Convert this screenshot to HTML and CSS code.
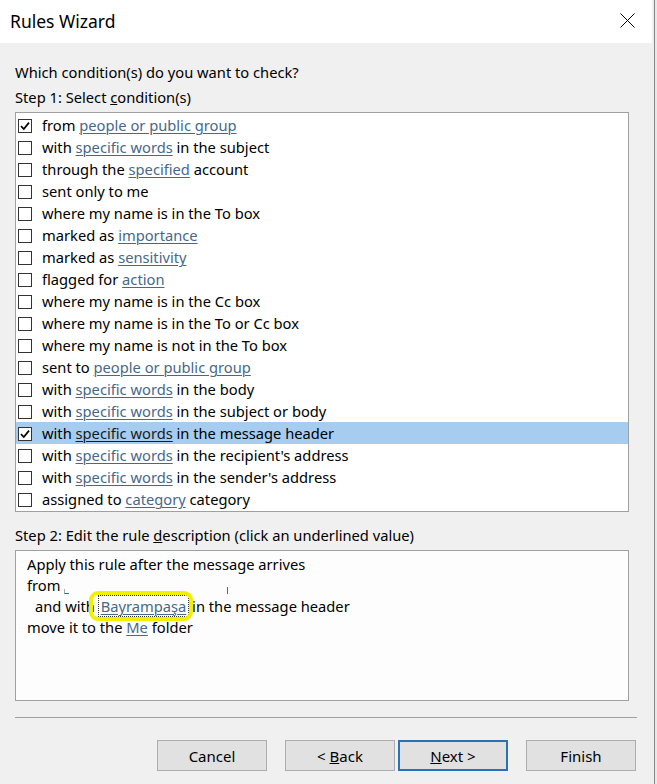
FILE: index.html
```html
<!DOCTYPE html>
<html lang="en">
<head>
<meta charset="utf-8">
<title>Rules Wizard</title>
<link rel="stylesheet" href="styles.css">
</head>
<body>
<div class="window">
  <div class="titlebar">
    <span class="title">Rules Wizard</span>
    <svg class="close" width="15" height="15" viewBox="0 0 15 15"><path d="M0.5 0.5 L14.5 14.5 M14.5 0.5 L0.5 14.5" stroke="#000" stroke-width="1" fill="none"/></svg>
  </div>
  <div class="content">
    <div class="heading">Which condition(s) do you want to check?</div>
    <div class="label">Step 1: Select <u>c</u>ondition(s)</div>
    <ul class="conditions">
      <li class="row"><span class="cb checked"><svg viewBox="0 0 12 12"><path d="M2 6.2 L4.8 9 L10 2.6" stroke="#000" stroke-width="1.7" fill="none"/></svg></span><span>from <a class="lnk">people or public group</a></span></li>
      <li class="row"><span class="cb"></span><span>with <a class="lnk">specific words</a> in the subject</span></li>
      <li class="row"><span class="cb"></span><span>through the <a class="lnk">specified</a> account</span></li>
      <li class="row"><span class="cb"></span><span>sent only to me</span></li>
      <li class="row"><span class="cb"></span><span>where my name is in the To box</span></li>
      <li class="row"><span class="cb"></span><span>marked as <a class="lnk">importance</a></span></li>
      <li class="row"><span class="cb"></span><span>marked as <a class="lnk">sensitivity</a></span></li>
      <li class="row"><span class="cb"></span><span>flagged for <a class="lnk">action</a></span></li>
      <li class="row"><span class="cb"></span><span>where my name is in the Cc box</span></li>
      <li class="row"><span class="cb"></span><span>where my name is in the To or Cc box</span></li>
      <li class="row"><span class="cb"></span><span>where my name is not in the To box</span></li>
      <li class="row"><span class="cb"></span><span>sent to <a class="lnk">people or public group</a></span></li>
      <li class="row"><span class="cb"></span><span>with <a class="lnk">specific words</a> in the body</span></li>
      <li class="row"><span class="cb"></span><span>with <a class="lnk">specific words</a> in the subject or body</span></li>
      <li class="row selected"><span class="cb checked"><svg viewBox="0 0 12 12"><path d="M2 6.2 L4.8 9 L10 2.6" stroke="#000" stroke-width="1.7" fill="none"/></svg></span><span>with <a class="lnk">specific words</a> in the message header</span></li>
      <li class="row"><span class="cb"></span><span>with <a class="lnk">specific words</a> in the recipient's address</span></li>
      <li class="row"><span class="cb"></span><span>with <a class="lnk">specific words</a> in the sender's address</span></li>
      <li class="row"><span class="cb"></span><span>assigned to <a class="lnk">category</a> category</span></li>
    </ul>
    <div class="label step2">Step 2: Edit the rule <u>d</u>escription (click an underlined value)</div>
    <div class="desc">
      <div class="dline">Apply this rule after the message arrives</div>
      <div class="dline">from <span class="redacted"></span></div>
      <div class="dline indent">and with <span class="mark"><a class="lnk focus">Bayrampaşa</a></span> in the message header</div>
      <div class="dline">move it to the <a class="lnk">Me</a> folder</div>
    </div>
    <hr class="sep">
    <div class="buttons">
      <button class="btn">Cancel</button>
      <button class="btn back">&lt; <u>B</u>ack</button>
      <button class="btn next"><u>N</u>ext &gt;</button>
      <button class="btn finish">Finish</button>
    </div>
  </div>
</div>
</body>
</html>
```

FILE: styles.css
```css
html, body {
  margin: 0;
  padding: 0;
}
body {
  background: #e9e9e9;
  font-family: "Noto Sans", "Open Sans", sans-serif;
  font-size: 14.7px;
  color: #000;
  width: 657px;
  height: 784px;
  overflow: hidden;
}
.window {
  width: 654px;
  height: 784px;
  background: #f0f0f0;
  border-right: 1px solid #858585;
}
.titlebar {
  height: 43px;
  background: #fff;
  display: flex;
  align-items: center;
  justify-content: space-between;
  padding: 0 17px 0 10px;
  margin-right: 2px;
}
.title {
  font-size: 17.5px;
  line-height: 22px;
  margin-top: -1px;
}
.close {
  display: block;
  margin-top: -2px;
}
.content {
  padding: 18px 0 0 15px;
}
.heading {
  line-height: 22px;
}
.label {
  line-height: 22px;
  margin-top: 3px;
}
.label u {
  text-decoration-thickness: 1px;
}
.conditions {
  list-style: none;
  margin: 4px 0 0;
  padding: 1px 0;
  width: 614px;
  box-sizing: border-box;
  border: 1px solid #a0a0a0;
  background: #fff;
}
.row {
  height: 22px;
  display: flex;
  align-items: center;
  padding-left: 2px;
  white-space: nowrap;
}
.row.selected {
  background: #a6cdf0;
}
.cb {
  width: 12px;
  height: 12px;
  border: 1px solid #333;
  background: #fff;
  margin-right: 10px;
  margin-top: 2px;
  flex: none;
}
.cb svg {
  display: block;
  width: 12px;
  height: 12px;
}
.lnk {
  color: #476889;
  text-decoration: underline;
  text-decoration-thickness: 1px;
  text-underline-offset: 2px;
}
.selected .lnk {
  color: #1a1a1a;
}
.step2 {
  margin-top: 12px;
}
.desc {
  margin-top: 4px;
  width: 614px;
  height: 151px;
  box-sizing: border-box;
  border: 1px solid #a0a0a0;
  background: #fdfdfd;
  padding: 3px 11px;
}
.dline {
  line-height: 21px;
  white-space: nowrap;
}
.indent {
  padding-left: 8px;
}
.redacted {
  display: inline-block;
  width: 164px;
  height: 14px;
  position: relative;
  vertical-align: -3px;
}
.redacted::before {
  content: "";
  position: absolute;
  left: 0;
  bottom: 0;
  width: 4px;
  height: 4px;
  border-bottom: 1px solid #476889;
  border-left: 1px solid #9fb0c0;
}
.redacted::after {
  content: "";
  position: absolute;
  right: 0;
  bottom: 0;
  width: 1px;
  height: 7px;
  background: #476889;
}
.mark {
  position: relative;
  display: inline-block;
}
.mark::after {
  content: "";
  position: absolute;
  left: -10px;
  right: -5px;
  top: -5px;
  bottom: -4px;
  border: 4px solid #f4ee00;
  border-radius: 9px;
  pointer-events: none;
}
.focus {
  outline: 1px dotted #333;
  outline-offset: 0;
  padding: 0 2px;
}
.sep {
  margin: 16px 0 0;
  width: 622px;
  height: 0;
  border: 0;
  border-top: 1px solid #a0a0a0;
}
.buttons {
  display: flex;
  margin-top: 22px;
  padding-left: 142px;
}
.btn {
  width: 110px;
  height: 31px;
  box-sizing: border-box;
  background: #e1e1e1;
  border: 1px solid #adadad;
  font-family: inherit;
  font-size: 15px;
  color: #000;
  padding: 0;
  margin: 0;
}
.btn u {
  text-decoration-thickness: 1px;
}
.back {
  margin-left: 18px;
}
.next {
  margin-left: 3px;
  border: 2px solid #2a72b8;
}
.finish {
  margin-left: 18px;
}
```
